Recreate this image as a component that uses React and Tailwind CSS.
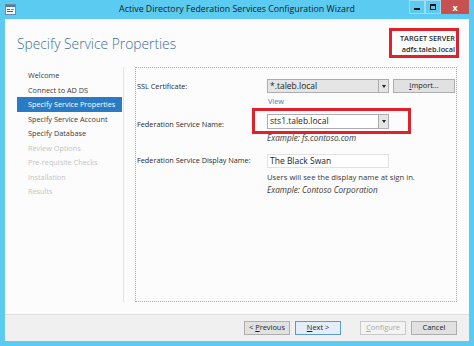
import React from 'react';

const navItems = [
  { label: 'Welcome', state: 'done' },
  { label: 'Connect to AD DS', state: 'done' },
  { label: 'Specify Service Properties', state: 'active' },
  { label: 'Specify Service Account', state: 'done' },
  { label: 'Specify Database', state: 'done' },
  { label: 'Review Options', state: 'off' },
  { label: 'Pre-requisite Checks', state: 'off' },
  { label: 'Installation', state: 'off' },
  { label: 'Results', state: 'off' },
];

const AppIcon = () => (
  <svg width="11" height="11" viewBox="0 0 11 11">
    <rect x="0.5" y="0.5" width="10" height="10" fill="#f4f7fa" stroke="#6f8aa3" />
    <rect x="1" y="1" width="9" height="2" fill="#4d79a8" />
    <rect x="2" y="5" width="3" height="1" fill="#556" />
    <rect x="2" y="7" width="6" height="1" fill="#556" />
    <rect x="6" y="5" width="3" height="1" fill="#889" />
  </svg>
);

const TitleBar = () => (
  <div className="relative h-[19px] flex items-start justify-between shrink-0">
    <div className="h-[19px] flex items-center pl-[5px]">
      <AppIcon />
    </div>
    {/* title centred over the whole bar */}
    <div className="absolute inset-x-0 top-0 h-[19px] flex items-center justify-center text-[8.8px] text-[#1a1a1a] pointer-events-none">
      Active Directory Federation Services Configuration Wizard
    </div>
    <div className="flex h-[14px] mr-[5px]">
      <div className="w-[16px] h-[14px] border border-[#9fdcf3] flex items-end justify-center pb-[3px]">
        <div className="w-[6px] h-[2px] bg-[#111]" />
      </div>
      <div className="w-[16px] h-[14px] border border-[#9fdcf3] flex items-center justify-center">
        <div className="w-[6px] h-[6px] border border-[#111] border-t-2" />
      </div>
      <div className="w-[28px] h-[14px] bg-[#c75050] flex items-center justify-center text-white text-[9px] font-bold leading-none">
        x
      </div>
    </div>
  </div>
);

const Combo = ({ value, disabled }) => (
  <div
    className={
      disabled
        ? 'w-[122px] h-[14px] border border-[#acacac] bg-[#e5e5e5] flex'
        : 'w-[122px] h-[15px] border border-[#abadb3] bg-white flex'
    }
  >
    <div className="flex-1 pl-[2px] text-[8.5px] leading-[12px] text-[#1e1e1e]">{value}</div>
    <div className="w-[10px] border-l border-[#acacac] bg-[#e5e5e5] flex items-center justify-center">
      <div className="w-0 h-0 border-l-[2.5px] border-r-[2.5px] border-t-[3px] border-l-transparent border-r-transparent border-t-[#222]" />
    </div>
  </div>
);

const Btn = ({ children, primary, disabled, w = 'w-[46px]' }) => (
  <div
    className={
      w +
      ' h-[14px] flex items-center justify-center text-[7.4px] leading-none ' +
      (disabled
        ? 'border border-[#c9c9c9] bg-[#f4f4f4] text-[#a8a8a8]'
        : primary
        ? 'border border-[#5b9bd5] bg-[#e5eef6] text-[#1e1e1e]'
        : 'border border-[#adadad] bg-[#e1e1e1] text-[#1e1e1e]')
    }
  >
    {children}
  </div>
);

export default function App() {
  return (
    <div
      className="w-[474px] h-[346px] bg-[#5ccbf1] flex flex-col overflow-hidden"
      style={{ fontFamily: '"Open Sans", "Noto Sans", sans-serif' }}
    >
      <TitleBar />

      <div className="flex-1 mx-[5px] mb-[5px] bg-[#fcfcfc] flex flex-col">
        {/* Header */}
        <div className="h-[48px] flex justify-between pl-[12px] pr-[10px] shrink-0">
          <h1 className="mt-[15px] text-[13.8px] font-light leading-[20px] text-[#3b6f99]">
            Specify Service Properties
          </h1>
          <div className="relative mt-[9px] w-[70px] h-[30px] border-[3px] border-[#e0202b] pt-[2px] pr-[1px] text-right text-[7.3px] leading-[11px] font-semibold text-[#2a2a2a] whitespace-nowrap">
            <div>TARGET SERVER</div>
            <div>adfs.taleb.local</div>
          </div>
        </div>

        {/* Main */}
        <div className="flex-1 flex pl-[12px] pr-[12px] pb-[12px]">
          <div className="w-[106px] pt-[1px]">
            {navItems.map((item) => (
              <div
                key={item.label}
                className={
                  'h-[14.5px] pl-[11px] text-[7.3px] leading-[14.5px] whitespace-nowrap ' +
                  (item.state === 'active'
                    ? 'bg-[#2b7bc4] text-white mr-[1px]'
                    : item.state === 'off'
                    ? 'text-[#c4c4c4]'
                    : 'text-[#3a3a3a]')
                }
              >
                {item.label}
              </div>
            ))}
          </div>
          <div className="w-px bg-[#e3e3e3]" />

          <div className="flex-1 ml-[11px] border border-dotted border-[#a9a9a9] pt-[11px] text-[7.3px] text-[#2a2a2a]">
            {/* SSL certificate */}
            <div className="flex items-center">
              <div className="w-[131px] pl-[1px]">SSL Certificate:</div>
              <Combo value="*.taleb.local" disabled />
              <div className="ml-[4px]">
                <Btn w="w-[62px]">
                  <span>
                    <span className="underline">I</span>mport...
                  </span>
                </Btn>
              </div>
            </div>
            <div className="pl-[132px] mt-[1px] text-[#3a7bc8] leading-[14px]">View</div>

            {/* Federation service name */}
            <div className="flex items-start mt-[6px]">
              <div className="w-[131px] pl-[1px] leading-[14px] mt-[3px]">Federation Service Name:</div>
              <div>
                <div className="relative">
                  <Combo value="sts1.taleb.local" />
                  <div className="absolute left-[-15px] right-[-22px] top-[-6px] bottom-[-5px] border-[3px] border-[#e0202b]" />
                </div>
                <div className="italic mt-[3px] text-[8.2px] leading-[12px] text-[#3a3a3a]">Example: fs.contoso.com</div>
              </div>
            </div>

            {/* Display name */}
            <div className="flex items-start mt-[10px]">
              <div className="w-[131px] pl-[1px] leading-[12px]">Federation Service Display Name:</div>
              <div>
                <div className="w-[122px] h-[14px] border border-[#e2e2e2] bg-white pl-[2px] text-[8.5px] leading-[12px] text-[#1e1e1e]">
                  The Black Swan
                </div>
                <div className="mt-[3px] text-[7.7px] leading-[12px] text-[#3a3a3a]">Users will see the display name at sign in.</div>
                <div className="mt-[1px] italic text-[8.2px] leading-[12px] text-[#3a3a3a]">Example: Contoso Corporation</div>
              </div>
            </div>
          </div>
        </div>

        {/* Footer */}
        <div className="h-[27px] shrink-0 border-t border-[#dedede] bg-[#f0f0f0] flex items-center justify-end pr-[12px] pb-[1px]">
          <Btn>
            <span>
              &lt; <span className="underline">P</span>revious
            </span>
          </Btn>
          <div className="ml-[5px]">
            <Btn primary>
              <span>
                <span className="underline">N</span>ext &gt;
              </span>
            </Btn>
          </div>
          <div className="ml-[19px]">
            <Btn disabled>
              <span>
                <span className="underline">C</span>onfigure
              </span>
            </Btn>
          </div>
          <div className="ml-[5px]">
            <Btn>Cancel</Btn>
          </div>
        </div>
      </div>
    </div>
  );
}
